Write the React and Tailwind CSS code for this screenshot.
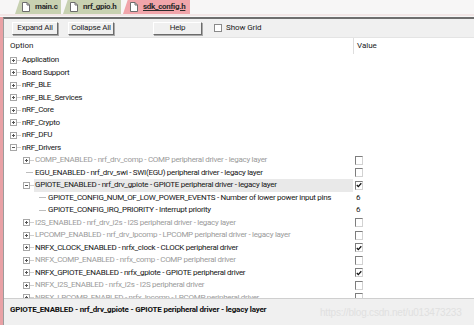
import React from "react";

const font = { fontFamily: '"Liberation Sans", Arial, sans-serif' };
const treeFont = { fontFamily: 'Roboto, "Liberation Sans", Arial, sans-serif' };

const FileIcon = () => (
  <svg width="8" height="10" viewBox="0 0 8 10" className="shrink-0">
    <path d="M0.5 0.5 H5 L7.5 3 V9.5 H0.5 Z" fill="#fff" stroke="#6d6d6d" />
    <path d="M5 0.5 V3 H7.5" fill="none" stroke="#6d6d6d" />
  </svg>
);

const Tab = ({ label, active, className }) => (
  <div
    className={`flex items-center gap-[5px] h-[15px] pl-[7px] [clip-path:polygon(5px_0,100%_0,100%_100%,0_100%)] ${
      active ? "bg-[#f1a5aa]" : "bg-[#c8d1b1]"
    } ${className}`}
  >
    <FileIcon />
    <span
      className={`text-[8px] font-bold tracking-[-0.3px] text-[#2b2b2b] ${
        active ? "underline underline-offset-[1px]" : ""
      }`}
      style={treeFont}
    >
      {label}
    </span>
  </div>
);

const Btn = ({ children, className }) => (
  <div
    className={`h-[13px] flex items-center justify-center text-[8px] tracking-[-0.2px] text-[#222] bg-[#f0f0f0] border border-t-white border-l-white border-r-[#6b6b6b] border-b-[#6b6b6b] shadow-[1px_1px_0_#a8a8a8] ${className}`}
    style={treeFont}
  >
    {children}
  </div>
);

const Expander = ({ open }) => (
  <svg width="7" height="7" viewBox="0 0 7 7" className="shrink-0">
    <rect x="0.5" y="0.5" width="6" height="6" fill="#fff" stroke="#a7a7a7" />
    <path d="M2 3.5 H5" stroke="#555" />
    {!open && <path d="M3.5 2 V5" stroke="#555" />}
  </svg>
);

const Check = ({ on }) => (
  <div className="w-[8px] h-[9px] bg-white border border-t-[#7d7d7d] border-l-[#7d7d7d] border-r-[#d2d2d2] border-b-[#d2d2d2] flex items-center justify-center">
    {on && (
      <svg width="6" height="6" viewBox="0 0 6 6">
        <path d="M0.8 3 L2.3 4.6 L5.3 1.2" fill="none" stroke="#111" strokeWidth="1.3" />
      </svg>
    )}
  </div>
);

const rows = [
  { lvl: 0, box: "plus", text: "Application" },
  { lvl: 0, box: "plus", text: "Board Support" },
  { lvl: 0, box: "plus", text: "nRF_BLE" },
  { lvl: 0, box: "plus", text: "nRF_BLE_Services" },
  { lvl: 0, box: "plus", text: "nRF_Core" },
  { lvl: 0, box: "plus", text: "nRF_Crypto" },
  { lvl: 0, box: "plus", text: "nRF_DFU" },
  { lvl: 0, box: "minus", text: "nRF_Drivers" },
  { lvl: 1, box: "plus", text: "COMP_ENABLED - nrf_drv_comp - COMP peripheral driver - legacy layer", muted: true, val: "off" },
  { lvl: 1, box: null, text: "EGU_ENABLED  - nrf_drv_swi - SWI(EGU) peripheral driver - legacy layer", val: "off" },
  { lvl: 1, box: "minus", text: "GPIOTE_ENABLED - nrf_drv_gpiote - GPIOTE peripheral driver - legacy layer", val: "on", sel: true },
  { lvl: 2, box: null, text: "GPIOTE_CONFIG_NUM_OF_LOW_POWER_EVENTS - Number of lower power input pins", val: "6" },
  { lvl: 2, box: null, text: "GPIOTE_CONFIG_IRQ_PRIORITY  - Interrupt priority", val: "6" },
  { lvl: 1, box: "plus", text: "I2S_ENABLED - nrf_drv_i2s - I2S peripheral driver - legacy layer", muted: true, val: "off" },
  { lvl: 1, box: "plus", text: "LPCOMP_ENABLED - nrf_drv_lpcomp - LPCOMP peripheral driver - legacy layer", muted: true, val: "off" },
  { lvl: 1, box: "plus", text: "NRFX_CLOCK_ENABLED - nrfx_clock - CLOCK peripheral driver", val: "on" },
  { lvl: 1, box: "plus", text: "NRFX_COMP_ENABLED - nrfx_comp - COMP peripheral driver", muted: true, val: "off" },
  { lvl: 1, box: "plus", text: "NRFX_GPIOTE_ENABLED - nrfx_gpiote - GPIOTE peripheral driver", val: "on" },
  { lvl: 1, box: "plus", text: "NRFX_I2S_ENABLED - nrfx_i2s - I2S peripheral driver", muted: true, val: "off" },
  { lvl: 1, box: "plus", text: "NRFX_LPCOMP_ENABLED - nrfx_lpcomp - LPCOMP peripheral driver", muted: true, val: "off" },
];

const indent = ["pl-[6px]", "pl-[19px]", "pl-[32px]"];

const Row = ({ r }) => (
  <div className="flex h-[12.5px] items-center">
    <div className={`w-[349px] h-full flex items-center whitespace-nowrap overflow-hidden ${indent[r.lvl]}`}>
      {r.box ? (
        <>
          <Expander open={r.box === "minus"} />
          <div className="w-[4px] h-px bg-[#cfcfcf] shrink-0" />
        </>
      ) : (
        <div className="w-[11px] shrink-0 flex">
          <div className="ml-[3px] w-[7px] h-px bg-[#bdbdbd]" />
        </div>
      )}
      <div
        className={`h-full flex items-center flex-1 pl-[1px] text-[8px] tracking-[-0.3px] ${
          r.muted ? "text-[#9b9b9b]" : "text-[#161616]"
        } ${r.sel ? "bg-[#e9e9e9]" : ""}`}
        style={treeFont}
      >
        {r.text}
      </div>
    </div>
    <div className="pl-[2px] flex items-center">
      {r.val === "on" && <Check on />}
      {r.val === "off" && <Check />}
      {r.val === "6" && (
        <span className="text-[8px] text-[#161616] pl-[1px]" style={treeFont}>
          6
        </span>
      )}
    </div>
  </div>
);

export default function App() {
  return (
    <div className="w-[474px] h-[325px] overflow-hidden bg-white flex flex-col" style={font}>
      {/* tab strip */}
      <div className="h-[17px] bg-[#f7f6f6] flex flex-col shrink-0">
        <div className="flex items-end h-[16px] pl-[15px] gap-[2px] border-b-[2px] border-[#f2e6e6]">
          <Tab label="main.c" className="w-[46px]" />
          <Tab label="nrf_gpio.h" className="w-[58px]" />
          <Tab label="sdk_config.h" active className="w-[67px]" />
        </div>
      </div>

      <div className="flex flex-1 min-h-0">
        <div className="w-[3px] bg-[#e9a1a5] shrink-0" />
        <div className="flex-1 flex flex-col border-l border-[#9c9c9c] border-t-2 border-t-[#6e6e6e] min-w-0">
          {/* toolbar */}
          <div className="h-[19px] bg-[#f0f0f0] flex items-center pl-[8px] shrink-0 border-b border-[#e4e4e4]">
            <Btn className="w-[46px]">Expand All</Btn>
            <Btn className="w-[46px] ml-[10px]">Collapse All</Btn>
            <Btn className="w-[49px] ml-[39px]">Help</Btn>
            <div className="ml-[12px] w-[8px] h-[8px] bg-white border border-[#8a8a8a]" />
            <span className="ml-[4px] text-[8px] tracking-[-0.1px] text-[#222]" style={treeFont}>
              Show Grid
            </span>
          </div>

          {/* header */}
          <div className="h-[16px] flex items-center shrink-0" style={treeFont}>
            <div className="w-[349px] pl-[6px] text-[8px] text-[#222]">Option</div>
            <div className="h-full border-l border-[#dedede] pl-[3px] flex items-center text-[8px] text-[#222]">
              Value
            </div>
          </div>

          {/* tree */}
          <div className="flex-1 min-h-0 overflow-hidden">
            {rows.map((r, i) => (
              <Row key={i} r={r} />
            ))}
          </div>

          {/* description */}
          <div className="h-[27px] shrink-0 bg-[#f0f0f0] border-t border-[#cfcfcf] flex items-start pt-[5px] pl-[6px] relative">
            <span className="text-[8px] font-bold tracking-[-0.2px] text-[#111]" style={treeFont}>
              GPIOTE_ENABLED - nrf_drv_gpiote - GPIOTE peripheral driver - legacy layer
            </span>
            <span className="absolute left-[316px] top-[6px] text-[10px] text-[#e0e0e0] tracking-[-0.2px]">
              https://blog.csdn.net/u013473233
            </span>
          </div>
        </div>
      </div>
    </div>
  );
}
